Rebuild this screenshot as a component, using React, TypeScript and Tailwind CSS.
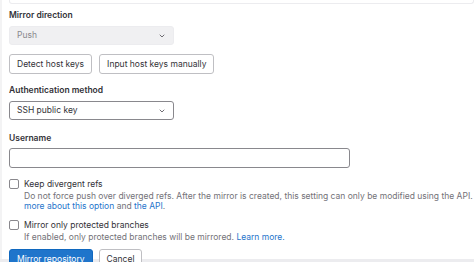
import { ChevronDown } from 'lucide-react';

function Select({ value, disabled }: { value: string; disabled?: boolean }) {
  return (
    <div
      className={`flex h-[19px] w-[165px] items-center justify-between rounded-[3px] border px-[7px] ${
        disabled ? 'border-[#ececef] bg-[#f0f0f2] text-[#89888d]' : 'border-[#89888d] bg-white text-[#333238]'
      }`}
    >
      <span>{value}</span>
      <ChevronDown size={8} strokeWidth={2.5} className="text-[#535158]" />
    </div>
  );
}

function Button({ children }: { children: React.ReactNode }) {
  return (
    <button className="relative z-10 h-[20px] rounded-[3px] border border-[#bfbfc3] bg-white px-[7px] text-[#333238]">
      {children}
    </button>
  );
}

function Check({ label, children }: { label: string; children: React.ReactNode }) {
  return (
    <div className="flex gap-[5px]">
      <div className="mt-[1px] h-[10px] w-[10px] shrink-0 rounded-[2px] border border-[#89888d] bg-white" />
      <div>
        <div className="leading-[12px] text-[#333238]">{label}</div>
        <div className="mt-[1px] leading-[10px] text-[#737278]">{children}</div>
      </div>
    </div>
  );
}

export default function App() {
  return (
    <div
      className="relative h-[262px] w-[474px] overflow-hidden bg-white text-[8.5px] text-[#333238]"
      style={{ fontFamily: 'Inter, "Noto Sans", sans-serif' }}
    >
      <div className="absolute left-0 top-0 h-full w-[2px] bg-[#f3f3f4]" />
      <div className="absolute bottom-0 left-0 h-[3px] w-full bg-[#ececef]" />
      <div className="pl-[9px]">
        <div className="-mt-[10px] h-[14px] rounded-b-[3px] border border-t-0 border-[#ececef]" />

        <div className="mt-[5px] font-semibold leading-[12px]">Mirror direction</div>
        <div className="mt-[5px]">
          <Select value="Push" disabled />
        </div>

        <div className="mt-[9px] flex gap-[7px]">
          <Button>Detect host keys</Button>
          <Button>Input host keys manually</Button>
        </div>

        <div className="mt-[10px] font-semibold leading-[12px]">Authentication method</div>
        <div className="mt-[5px]">
          <Select value="SSH public key" />
        </div>

        <div className="mt-[12px] font-semibold leading-[12px]">Username</div>
        <div className="mt-[4px] h-[20px] w-[341px] rounded-[3px] border border-[#89888d] bg-white" />

        <div className="mt-[10px]">
          <Check label="Keep divergent refs">
            Do not force push over diverged refs. After the mirror is created, this setting can only be modified using the API.
            <br />
            <span className="text-[#1f75cb]">more about this option</span> and{' '}
            <span className="text-[#1f75cb]">the API</span>.
          </Check>
        </div>

        <div className="mt-[8px]">
          <Check label="Mirror only protected branches">
            If enabled, only protected branches will be mirrored. <span className="text-[#1f75cb]">Learn more.</span>
          </Check>
        </div>

        <div className="mt-[7px] flex gap-[6px]">
          <button className="relative z-10 h-[20px] rounded-[3px] border border-[#1068bf] bg-[#1f75cb] px-[7px] text-white">
            Mirror repository
          </button>
          <Button>Cancel</Button>
        </div>
      </div>
    </div>
  );
}
